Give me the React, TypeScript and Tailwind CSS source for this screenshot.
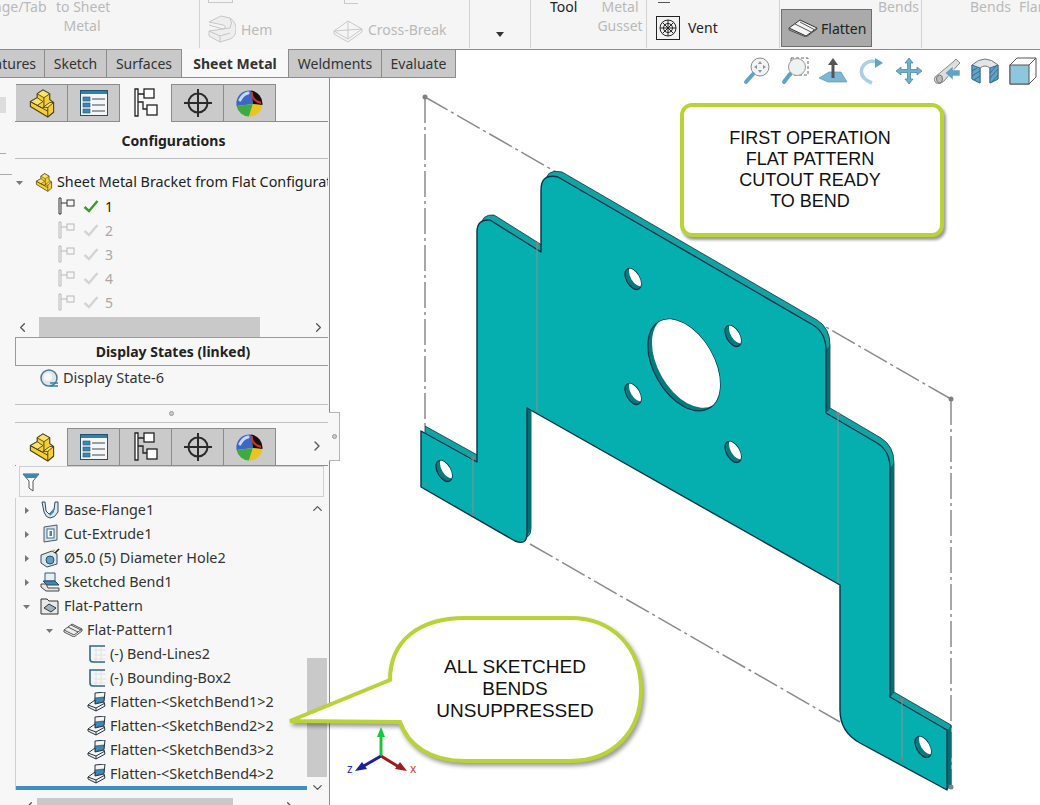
import type { ReactNode } from 'react';
import { ChevronDown, ChevronLeft, ChevronRight, ChevronUp } from 'lucide-react';

const FACE =
  'M421 431 L477 462 L477 232 Q477 219 490 220 L541 252 L541 190 Q541 173 558 177 L813 325 Q826 333 826 350 L826 413 L877 443 Q890 451 890 468 L890 697 L947 730 L947 790 L860 743 Q840 732 840 710 L840 585 L527 408 L527 533 Q527 546 515 541 L421 487 Z';

const HOLES = [
  { x: 633, y: 279, a: 11.5, b: 6.5 },
  { x: 733, y: 336, a: 11.5, b: 6.5 },
  { x: 633, y: 394, a: 11.5, b: 6.5 },
  { x: 733, y: 452, a: 11.5, b: 6.5 },
  { x: 684, y: 365, a: 50, b: 30 },
  { x: 444, y: 471, a: 11.5, b: 6.5 },
  { x: 923, y: 747, a: 11.5, b: 6.5 },
];

function Part() {
  return (
    <svg viewBox="0 0 1040 805" className="pointer-events-none absolute left-0 top-0 h-[805px] w-[1040px]">
      <g stroke="#8a8a8a" strokeWidth="1.5" fill="none" strokeDasharray="26 4 3 4">
        <path d="M425 97 L556 172" />
        <path d="M425 97 L425 427" />
        <path d="M951 399 L819 323" />
        <path d="M951 399 L951 787" />
        <path d="M530 544 L840 722" />
      </g>
      <path d={FACE} transform="translate(4 -5)" fill="#12a3a3" stroke="#07344a" strokeWidth="0.8" />
      <path d="M826 350 L830 345 L830 409 L826 413 Z" fill="#006f72" />
      <path d="M890 468 L894 463 L894 693 L890 697 Z" fill="#006f72" />
      <path d="M947 730 L951 726 L951 786 L947 790 Z" fill="#006f72" />
      <path d="M527 408 L531 410 L531 530 L527 535 Z" fill="#006f72" />
      <path d={FACE} fill="#06afaf" stroke="#07344a" strokeWidth="1.4" strokeLinejoin="round" />
      <defs>
        {HOLES.map((h, i) => (
          <clipPath id={`hole-${i}`} key={i}>
            <ellipse cx={h.x} cy={h.y} rx={h.b} ry={h.a} transform={`rotate(-30 ${h.x} ${h.y})`} />
          </clipPath>
        ))}
      </defs>
      {HOLES.map((h, i) => (
        <g key={i}>
          <ellipse cx={h.x} cy={h.y} rx={h.b} ry={h.a} transform={`rotate(-30 ${h.x} ${h.y})`} fill="#067a7c" stroke="#07344a" strokeWidth="1.3" />
          <g clipPath={`url(#hole-${i})`}>
            <ellipse cx={h.x + 4} cy={h.y - 3} rx={h.b} ry={h.a} transform={`rotate(-30 ${h.x + 4} ${h.y - 3})`} fill="#ffffff" />
          </g>
        </g>
      ))}
      <g stroke="#7f9395" strokeWidth="1.2" fill="none">
        <path d="M537 244 L537 411" />
        <path d="M473 460 L473 516" />
        <path d="M838 414 L838 583" />
        <path d="M902 699 L902 760" />
      </g>
      <g fill="#808080">
        <circle cx="425" cy="97" r="2.5" />
        <circle cx="951" cy="399" r="2.5" />
        <circle cx="951" cy="787" r="2.5" />
        <circle cx="838" cy="414" r="2" />
        <circle cx="902" cy="700" r="2" />
        <circle cx="537" cy="244" r="2" />
        <circle cx="473" cy="458" r="2" />
        <circle cx="425" cy="484" r="1.5" />
        <circle cx="473" cy="514" r="1.5" />
        <circle cx="902" cy="759" r="1.5" />
      </g>
      <path d="M381 755 L381 736" stroke="#22c23a" strokeWidth="3" />
      <path d="M381 727 L377 737 L385 737 Z" fill="#14cc38" />
      <path d="M381 756 L362 767" stroke="#1b1fa0" strokeWidth="3" />
      <path d="M355 771 L362 762 L367 769 Z" fill="#1b1fa0" />
      <path d="M381 756 L399 767" stroke="#a01c1c" strokeWidth="3" />
      <path d="M407 771 L395 769 L400 762 Z" fill="#a01c1c" />
      <path
        d="M390 680 C390 640 420 618 465 618 L570 618 C615 618 641 650 641 690 C641 730 615 761 570 761 L465 761 C430 761 408 745 400 722 L290 721 Z"
        fill="#ffffff"
        stroke="#b7d335"
        strokeWidth="4"
        strokeLinejoin="miter"
        className="drop-shadow-[2px_3px_2px_rgba(0,0,0,0.4)]"
      />
    </svg>
  );
}

function Tri({ open }: { open?: boolean }) {
  return (
    <svg width="9" height="9" viewBox="0 0 9 9" className="shrink-0">
      {open ? <path d="M1 3 L8 3 L4.5 7 Z" fill="#777" /> : <path d="M3 1 L7 4.5 L3 8 Z" fill="#777" />}
    </svg>
  );
}

function PartIcon({ w = 26, h = 29 }: { w?: number; h?: number }) {
  return (
    <svg width={w} height={h} viewBox="0 0 26 30" className="shrink-0">
      <path d="M1 13 L8 9 L8 5 L14 1 L21 5 L21 11 L25 14 L25 24 L19 29 L1 18 Z" fill="#f5d02e" stroke="#4a4020" strokeWidth="1.2" strokeLinejoin="round" />
      <path d="M8 5 L15 9 L21 5 L14 1 Z M1 13 L8 9 L14 13 L8 17 Z M14 19 L21 14 L25 14 L19 19 Z" fill="#fbe36a" stroke="#4a4020" strokeWidth="0.9" strokeLinejoin="round" />
      <path d="M15 9 L15 19 M19 19 L19 29 M1 13 L19 23 M8 17 L14 20" fill="none" stroke="#4a4020" strokeWidth="1" />
    </svg>
  );
}

function ListIcon() {
  return (
    <svg width="28" height="26" viewBox="0 0 28 26">
      <rect x="0.5" y="0.5" width="27" height="25" fill="#f3f7fa" stroke="#23506f" />
      <rect x="1" y="1" width="26" height="3" fill="#2f7fb0" />
      <g fill="#3d88b6" stroke="#23506f" strokeWidth="0.6">
        <rect x="3" y="7" width="7" height="4" />
        <rect x="3" y="13" width="7" height="4" />
        <rect x="3" y="19" width="7" height="4" />
      </g>
      <path d="M12 9 H25 M12 15 H25 M12 21 H25" stroke="#444" />
    </svg>
  );
}

function ConfigIcon() {
  return (
    <svg width="24" height="30" viewBox="0 0 24 30">
      <g fill="#fff" stroke="#222" strokeWidth="1.3">
        <rect x="10" y="1" width="10" height="9" />
        <rect x="13" y="17" width="10" height="10" />
        <path d="M1 1 H4 V28 H1 Z" />
        <path d="M4 6 H10 M4 14 H9 V21 H13" fill="none" />
      </g>
    </svg>
  );
}

function TargetIcon() {
  return (
    <svg width="28" height="28" viewBox="0 0 28 28">
      <circle cx="14" cy="14" r="9.5" fill="none" stroke="#2a2a2a" strokeWidth="2" />
      <path d="M14 0 V28 M0 14 H28" stroke="#2a2a2a" strokeWidth="2" />
    </svg>
  );
}

function SphereIcon() {
  return (
    <svg width="27" height="27" viewBox="0 0 27 27">
      <path d="M17 14 L15 .6 A13 13 0 0 0 .6 16 Z" fill="#3d67c4" />
      <path d="M17 14 L.6 16 A13 13 0 0 0 13 26.5 Z" fill="#3dab3d" />
      <path d="M17 14 L13 26.5 A13 13 0 0 0 26.4 15 Z" fill="#ecc41c" />
      <path d="M17 14 L26.4 15 A13 13 0 0 0 15 .6 Z" fill="#1a0c0c" />
      <path d="M16 2 Q15 10 25 13" stroke="#c8382c" strokeWidth="2" fill="none" />
      <path d="M4 10 Q7 4 12 3" stroke="#c6d9f5" strokeWidth="3" fill="none" strokeLinecap="round" />
    </svg>
  );
}

function PanelTabs({ active }: { active: number }) {
  const icons = [<PartIcon key="p" />, <ListIcon key="l" />, <ConfigIcon key="c" />, <TargetIcon key="t" />, <SphereIcon key="s" />];
  return (
    <div className="flex h-[38px] items-stretch border-b border-[#8c8c8c] pl-px pr-0">
      {icons.map((icon, i) => (
        <div
          key={i}
          className={
            i === active
              ? 'relative -mb-px flex w-[52px] items-center justify-center border-r border-[#8c8c8c] bg-[#f7f7f7]'
              : 'flex w-[52px] items-center justify-center border-r border-t border-[#8c8c8c] bg-[#cacaca]'
          }
        >
          {icon}
        </div>
      ))}
    </div>
  );
}

function FlagIcon({ faded }: { faded?: boolean }) {
  const c = faded ? '#b8b8b8' : '#333';
  return (
    <svg width="18" height="18" viewBox="0 0 18 18" className="shrink-0">
      <path d="M1 1 V17 M3 1 V17 M1 1 H3 M1 17 H3 M3 6 L9 6" stroke={c} fill="none" />
      <rect x="9" y="3" width="7" height="6" fill="none" stroke={c} />
    </svg>
  );
}

function Check({ faded }: { faded?: boolean }) {
  return (
    <svg width="16" height="14" viewBox="0 0 16 14" className="shrink-0">
      <path d="M1.5 8 L6 12 L14.5 2" fill="none" stroke={faded ? '#d4d4d4' : '#3f9a2b'} strokeWidth="2.4" />
    </svg>
  );
}

function ConfigRow({ n, active }: { n: number; active?: boolean }) {
  return (
    <div className="flex h-6 items-center pl-[43px]">
      <FlagIcon faded={!active} />
      <span className="ml-[7px]"><Check faded={!active} /></span>
      <span className={active ? 'ml-[6px] text-[#222]' : 'ml-[6px] text-[#a8a8a8]'}>{n}</span>
    </div>
  );
}

function FlangeIcon() {
  return (
    <svg width="20" height="20" viewBox="0 0 20 20">
      <path d="M2 2 L4 12 Q6 18 10 18 Q15 18 18 12 L18 2 L15 2 L14 10 L9 14 L6 11 L5 2 Z" fill="#dfe8ee" stroke="#2e4d63" />
      <path d="M9 14 L14 8 L14 12 L10 16 Z" fill="#3f87b4" />
    </svg>
  );
}

function CutIcon() {
  return (
    <svg width="20" height="20" viewBox="0 0 20 20">
      <path d="M4 3 L17 1 L17 16 L4 18 Z" fill="#dbe3e8" stroke="#4b5a63" />
      <rect x="7" y="5" width="7" height="9" fill="#fff" stroke="#2f6f98" />
      <rect x="9.5" y="7" width="2.5" height="5" fill="#3f87b4" />
    </svg>
  );
}

function HoleIcon() {
  return (
    <svg width="20" height="20" viewBox="0 0 20 20">
      <path d="M1 7 L12 3 L17 6 L17 16 L7 19 L1 15 Z" fill="#dfe6ea" stroke="#3a4a55" />
      <circle cx="10" cy="12" r="4" fill="#5f9fc8" stroke="#24506e" />
      <path d="M15 5 L19 1" stroke="#222" strokeWidth="1.6" />
      <circle cx="14" cy="2.5" r="1" fill="#e0b020" />
    </svg>
  );
}

function BendIcon() {
  return (
    <svg width="20" height="20" viewBox="0 0 20 20">
      <path d="M5 1 L15 1 L15 9 L5 9 Z" fill="#e8eef2" stroke="#2c5a7a" />
      <path d="M3 9 L15 9 L19 13 L7 13 Z" fill="#3f87b4" stroke="#234b66" />
      <path d="M1 12 L6 12 L8 16 L19 16 L19 19 L6 19 L1 15 Z" fill="#e6e6e6" stroke="#444" />
    </svg>
  );
}

function FolderIcon() {
  return (
    <svg width="20" height="20" viewBox="0 0 20 20">
      <path d="M1 3 H7 L9 5 H18 V18 H1 Z" fill="#e9e9e9" stroke="#333" />
      <path d="M4 12 L9 8 L16 12 L11 16 Z" fill="#9fb4c0" stroke="#333" />
    </svg>
  );
}

function FlatIcon() {
  return (
    <svg width="20" height="14" viewBox="0 0 20 14">
      <path d="M1 7 L9 1 L19 6 L11 12 Z" fill="#eee" stroke="#555" />
      <path d="M1 7 L1 9 L11 14 L19 8 L19 6 M5 4 L15 9 M8 2 L18 7" fill="none" stroke="#555" />
    </svg>
  );
}

function SketchIcon() {
  return (
    <svg width="20" height="20" viewBox="0 0 20 20">
      <path d="M7 6 H19 M7 11 H19 M7 15 H19 M9 3 V17 M14 3 V17" stroke="#e2e2e2" fill="none" />
      <path d="M18 2 H3 V15 Q3 18 6 18 H18" stroke="#2d6a8e" strokeWidth="1.6" fill="none" />
    </svg>
  );
}

function FlattenIcon() {
  return (
    <svg width="20" height="20" viewBox="0 0 20 20">
      <path d="M8 1 L18 0 L17 9 L8 11 Z" fill="#f2f5f6" stroke="#26343d" />
      <path d="M8 6 L17 5 L17 10 L8 12 Z" fill="#3f87b4" stroke="#26343d" strokeWidth="0.6" />
      <path d="M1 13 L8 8 L8 12 L17 10 L18 14 L9 19 L1 15 Z" fill="#f5f5f5" stroke="#26343d" />
      <path d="M1 13 L9 16 L18 11 M9 16 L9 19" fill="none" stroke="#26343d" />
    </svg>
  );
}

function TreeRow({ pad, icon, label, arrow, gap = 4 }: { pad: number; icon: ReactNode; label: string; arrow?: 'open' | 'closed'; gap?: number }) {
  return (
    <div className="flex h-6 items-center whitespace-nowrap text-[14.35px]" style={{ paddingLeft: pad }}>
      <span className="flex w-[18px] shrink-0 items-center">{arrow ? <Tri open={arrow === 'open'} /> : null}</span>
      <span className="flex w-5 shrink-0 items-center justify-center">{icon}</span>
      <span className="text-[#333]" style={{ marginLeft: gap }}>{label}</span>
    </div>
  );
}

function RibbonText({ lines, className }: { lines: string[]; className: string }) {
  return (
    <div className={`-mt-[3px] whitespace-nowrap text-center leading-[19px] ${className}`}>
      {lines.map((l) => (
        <div key={l}>{l}</div>
      ))}
    </div>
  );
}

function Ribbon() {
  const col = 'flex h-[48px] shrink-0 border-r border-[#d2d2d2]';
  return (
    <div className="flex h-[49px] overflow-hidden bg-[#f5f5f5] text-[#b9b9b9]">
      <div className={`${col} w-[200px]`}>
        <RibbonText lines={['nge/Tab']} className="-ml-[7px] w-[55px] text-left" />
        <RibbonText lines={['to Sheet', 'Metal']} className="ml-[8px] w-[52px]" />
      </div>
      <div className={`${col} relative w-[270px] items-end pb-[5px] pl-[8px]`}>
        <div className="absolute left-[8px] top-0 h-[3px] w-[25px] border-x border-b border-[#c9c9c9]" />
        <div className="absolute left-[144px] top-0 h-[4px] w-[14px] border-b border-l border-[#c9c9c9]" />
        <svg width="28" height="28" viewBox="0 0 28 28">
          <path d="M1 7 L13 1 L22 3 Q28 7 28 14 Q28 22 22 24 L12 27 L1 21 L1 16 L15 14 Q20 12 15 10 Z" fill="#eeeeee" stroke="#c6c6c6" />
          <path d="M1 10 L15 14 M22 3 Q25 8 22 13 L15 14 M1 16 L12 21 L12 27 M12 21 L22 18" fill="none" stroke="#c6c6c6" />
        </svg>
        <span className="mb-[3px] ml-[5px] w-[92px]">Hem</span>
        <svg width="30" height="24" viewBox="0 0 30 24">
          <path d="M1 12 L15 2 L29 10 L15 20 Z M1 12 L1 15 L15 23 L29 13 L29 10 M15 2 L15 20 M1 12 L29 10" fill="none" stroke="#c9c9c9" />
        </svg>
        <span className="mb-[3px] ml-[5px]">Cross-Break</span>
      </div>
      <div className={`${col} w-[61px] items-end justify-center pb-[11px]`}>
        <svg width="8" height="5" viewBox="0 0 8 5"><path d="M0 0 H8 L4 5 Z" fill="#333" /></svg>
      </div>
      <div className={`${col} w-[116px] pl-[19px]`}>
        <div className="-mt-[3px] w-[47px] leading-[19px] text-[#222]">Tool</div>
        <RibbonText lines={['Metal', 'Gusset']} className="w-[46px]" />
      </div>
      <div className={`${col} relative w-[133px] items-end pb-[8px] pl-[9px]`}>
        <div className="absolute left-[11px] top-0 h-[3px] w-[12px] border-b border-[#555]" />
        <svg width="24" height="24" viewBox="0 0 24 24">
          <rect x="0.5" y="0.5" width="23" height="23" fill="#f2f2f2" stroke="#222" />
          <circle cx="12" cy="12" r="8" fill="none" stroke="#222" />
          <circle cx="12" cy="12" r="4.5" fill="none" stroke="#222" />
          <path d="M12 4 V20 M4 12 H20 M6.5 6.5 L17.5 17.5 M17.5 6.5 L6.5 17.5" stroke="#222" />
        </svg>
        <span className="mb-[2px] ml-[8px] text-[#222]">Vent</span>
      </div>
      <div className={`${col} w-[142px] pl-px`}>
        <div className="mt-[9px] flex h-[38px] w-[91px] items-center border border-[#6e6e6e] bg-[#aaaaaa] pl-[6px] text-[#222]">
          <svg width="30" height="18" viewBox="0 0 30 18">
            <path d="M1 9 L12 1 L29 9 L18 17 Z" fill="#f4f4f4" stroke="#333" />
            <path d="M1 9 L1 11 L18 18 L29 10 L29 9 M7 5 L23 13 M12 3 L27 11" fill="none" stroke="#555" />
          </svg>
          <span className="ml-[3px]">Flatten</span>
        </div>
        <div className="-mt-[3px] ml-[6px] leading-[19px]">Bends</div>
      </div>
      <div className="flex pl-[48px]">
        <div className="-mt-[3px] leading-[19px]">Bends</div>
        <div className="-mt-[3px] ml-[8px] leading-[19px]">Flar</div>
      </div>
    </div>
  );
}

function ToolIcon({ children }: { children: ReactNode }) {
  return (
    <svg width="28" height="28" viewBox="0 0 28 28" className="shrink-0">
      {children}
    </svg>
  );
}

function ViewToolbar() {
  return (
    <div className="ml-auto flex h-[28px] items-start gap-[10px] pr-[3px] pt-[7px]">
      <ToolIcon>
        <circle cx="17" cy="10" r="9" fill="#f3f3f3" stroke="#8b8b8b" />
        <path d="M17 4 L15 7 H19 Z M17 16 L15 13 H19 Z M11 10 L14 8 V12 Z M23 10 L20 8 V12 Z" fill="#7e98a8" />
        <path d="M10 17 L3 25" stroke="#5fa4c6" strokeWidth="4" strokeLinecap="round" />
      </ToolIcon>
      <ToolIcon>
        <rect x="10" y="1" width="17" height="17" fill="none" stroke="#666" strokeDasharray="3 2" />
        <circle cx="16" cy="10" r="8.5" fill="#eef2f3" stroke="#9a9a9a" />
        <path d="M9 17 L3 25" stroke="#5fa4c6" strokeWidth="4" strokeLinecap="round" />
      </ToolIcon>
      <ToolIcon>
        <path d="M0 21 L10 15 H22 L28 25 H9 Z" fill="#7ab8d6" stroke="#4d8fb0" strokeWidth="0.6" />
        <path d="M14 21 V7" stroke="#555" strokeWidth="3" />
        <path d="M14 1 L9 8 H19 Z" fill="#555" />
      </ToolIcon>
      <ToolIcon>
        <path d="M23 6 Q10 1 5 11 Q2 21 15 26" fill="none" stroke="#a9d0e3" strokeWidth="3.5" />
        <path d="M18 1 L26 6 L18 11 Z" fill="#5fa4c6" />
      </ToolIcon>
      <ToolIcon>
        <path d="M14 1 L18 6 H15.5 V12.5 H22 V10 L27 14 L22 18 V15.5 H15.5 V22 H18 L14 27 L10 22 H12.5 V15.5 H6 V18 L1 14 L6 10 V12.5 H12.5 V6 H10 Z" fill="#6fb0d0" stroke="#3f7f9f" strokeWidth="0.7" />
      </ToolIcon>
      <ToolIcon>
        <path d="M2 20 L20 5 L23 2 L27 6 L24 9 L11 24 Q7 28 3 26 Q0 23 2 20 Z" fill="#dddddd" stroke="#8a8a8a" />
        <ellipse cx="6.5" cy="22" rx="3" ry="4" fill="#bbbbbb" stroke="#777" />
        <path d="M27 13 V19 H20 L20 23 L12 16 L20 9 L20 13 Z" fill="#5fa4c6" stroke="#fff" strokeWidth="0.5" />
      </ToolIcon>
      <ToolIcon>
        <path d="M1 8 Q14 -4 27 8 V22 L19 26 V11 Q14 7 9 11 V26 L1 22 Z" fill="#dfe5e9" stroke="#777" />
        <path d="M1 8 L9 11 V26 L1 22 Z M19 11 L27 8 V22 L19 26 Z" fill="#5fa4c6" stroke="#35708f" />
        <path d="M1 14 L6 11 M1 19 L9 14 M3 23 L9 19 M19 16 L25 9 M19 21 L27 12 M21 25 L27 18" stroke="#2f5f7c" strokeWidth="0.8" />
      </ToolIcon>
      <ToolIcon>
        <path d="M1 8 L8 1 H27 V20 L20 27 H1 Z" fill="#fff" stroke="#555" />
        <rect x="1" y="8" width="19" height="19" fill="#8ec7dd" stroke="#555" />
        <path d="M20 8 L27 1" stroke="#555" />
      </ToolIcon>
    </div>
  );
}

function TabStrip() {
  const tab = 'flex items-center justify-center border-y border-r border-[#8c8c8c] bg-[#c9c9c9] text-[#333]';
  return (
    <div className="flex h-[29px] bg-white">
      <div className={`${tab} w-[45px] justify-end pr-[8px]`}>atures</div>
      <div className={`${tab} w-[62px]`}>Sketch</div>
      <div className={`${tab} w-[75px]`}>Surfaces</div>
      <div className="flex w-[107px] items-center justify-center border-b border-r border-[#8c8c8c] bg-[#f8f8f8] font-bold text-[#333]">Sheet Metal</div>
      <div className={`${tab} w-[93px]`}>Weldments</div>
      <div className={`${tab} w-[74px]`}>Evaluate</div>
      <div className="flex flex-1 border-t border-[#8c8c8c]">
        <ViewToolbar />
      </div>
    </div>
  );
}

function LeftPanel() {
  return (
    <div className="relative h-[727px] w-[330px] shrink-0 overflow-visible border-r border-[#8c8c8c] bg-[#f7f7f7]">
      <div className="absolute left-0 top-[19px] h-[16px] w-[6px] bg-[#dddddd]" />
      <div className="absolute left-0 top-[75px] h-px w-[6px] bg-[#aaaaaa]" />
      <div className="absolute left-0 top-[96px] h-px w-[12px] bg-[#aaaaaa]" />
      <div className="absolute left-[329px] top-[334px] flex h-[49px] w-[11px] items-center justify-center border-y border-r border-[#b5b5b5] bg-[#f7f7f7]">
        <span className="h-[5px] w-[5px] rounded-full border border-[#999] bg-[#ccc]" />
      </div>
      <div className="ml-[15px] mr-px h-full overflow-hidden pt-[6px]">
        <PanelTabs active={2} />
        <div className="flex h-[37px] items-center justify-center border-b border-[#bdbdbd] pl-[4px] font-bold text-[#222]">Configurations</div>
        <div className="pt-[11px]">
          <div className="flex h-6 items-center overflow-hidden whitespace-nowrap text-[14.35px]">
            <span className="flex w-[20px] shrink-0 items-center"><Tri open /></span>
            <PartIcon w={18} h={19} />
            <span className="ml-[4px] text-[#222]">Sheet Metal Bracket from Flat Configuration</span>
          </div>
          <ConfigRow n={1} active />
          <ConfigRow n={2} />
          <ConfigRow n={3} />
          <ConfigRow n={4} />
          <ConfigRow n={5} />
        </div>
        <div className="mt-[3px] flex h-[20px] items-center justify-between text-[#555]">
          <ChevronLeft size={15} />
          <div className="ml-[9px] h-full w-[221px] bg-[#c9c9c9]" />
          <div className="flex-1" />
          <ChevronRight size={15} className="mr-[2px]" />
        </div>
        <div className="flex h-[29px] items-center justify-center border border-r-0 border-[#9a9a9a] pl-[2px] pb-px font-bold text-[#222]">Display States (linked)</div>
        <div className="flex h-6 items-center whitespace-nowrap pl-[25px] text-[14.5px]">
          <svg width="19" height="19" viewBox="0 0 19 19">
            <circle cx="9" cy="9" r="8" fill="#dfe6ea" stroke="#4b7a96" strokeWidth="1.5" />
            <circle cx="8" cy="8" r="4" fill="#f7f7f7" />
            <path d="M10 14 H18 M10 17 H18" stroke="#2f7fb0" strokeWidth="1.5" />
          </svg>
          <span className="ml-[4px] text-[#333]">Display State-6</span>
        </div>
        <div className="mt-[14px] flex h-[19px] items-center justify-center border-y border-[#c2c2c2]">
          <span className="h-[5px] w-[5px] rounded-full border border-[#999] bg-[#ccc]" />
        </div>
        <div className="relative mt-[5px]">
          <PanelTabs active={0} />
          <ChevronRight size={16} className="absolute right-[3px] top-[10px] text-[#555]" />
        </div>
        <div className="ml-[4px] mr-[4px] flex h-[31px] items-center border border-[#cfcfcf] pl-[2px]">
          <svg width="18" height="20" viewBox="0 0 18 20">
            <path d="M1 2 H17 L11 9 V19 L7 16 V9 Z" fill="#fff" stroke="#555" />
            <path d="M1 2 H17 L14 6 H4 Z" fill="#3d88b6" />
          </svg>
        </div>
        <div className="mt-px flex h-[299px] items-start">
          <div className="w-[292px] border-l border-[#cfcfcf]">
            <TreeRow pad={6} arrow="closed" icon={<FlangeIcon />} label="Base-Flange1" />
            <TreeRow pad={6} arrow="closed" icon={<CutIcon />} label="Cut-Extrude1" />
            <TreeRow pad={6} arrow="closed" icon={<HoleIcon />} label="Ø5.0 (5) Diameter Hole2" />
            <TreeRow pad={6} arrow="closed" icon={<BendIcon />} label="Sketched Bend1" />
            <TreeRow pad={6} arrow="open" icon={<FolderIcon />} label="Flat-Pattern" />
            <TreeRow pad={29} arrow="open" icon={<FlatIcon />} label="Flat-Pattern1" />
            <TreeRow pad={53} icon={<SketchIcon />} label="(-) Bend-Lines2" gap={3} />
            <TreeRow pad={53} icon={<SketchIcon />} label="(-) Bounding-Box2" gap={3} />
            <TreeRow pad={53} icon={<FlattenIcon />} label="Flatten-<SketchBend1>2" gap={3} />
            <TreeRow pad={53} icon={<FlattenIcon />} label="Flatten-<SketchBend2>2" gap={3} />
            <TreeRow pad={53} icon={<FlattenIcon />} label="Flatten-<SketchBend3>2" gap={3} />
            <TreeRow pad={53} icon={<FlattenIcon />} label="Flatten-<SketchBend4>2" gap={3} />
            <div className="h-[4px] bg-[#3f8fc4]" />
          </div>
          <div className="w-[20px] text-[#555]">
            <div className="flex h-[20px] items-center justify-center"><ChevronUp size={15} /></div>
            <div className="h-[140px]" />
            <div className="h-[119px] bg-[#c9c9c9]" />
            <div className="flex h-[20px] items-center justify-center"><ChevronDown size={15} /></div>
          </div>
        </div>
        <div className="mt-[1px] flex h-[7px] items-start pl-[7px] text-[#555]">
          <ChevronLeft size={15} className="mt-[1px] shrink-0" />
          <div className="h-full w-[196px] bg-[#c9c9c9]" />
          <ChevronRight size={15} className="ml-[49px] mt-[1px] shrink-0" />
        </div>
      </div>
    </div>
  );
}

export default function App() {
  return (
    <div className="relative h-[805px] w-[1040px] overflow-hidden bg-white font-['Noto_Sans',sans-serif] text-[14px]">
      <Ribbon />
      <TabStrip />
      <div className="flex">
        <LeftPanel />
        <div className="flex-1" />
      </div>
      <Part />
      <div className="absolute left-[680px] top-[103px] flex h-[134px] w-[264px] items-center justify-center rounded-[12px] border-4 border-[#b7d335] bg-white pr-[4px] text-center font-['Liberation_Sans',sans-serif] text-[18px] leading-[21px] text-[#111] shadow-[2px_3px_3px_rgba(0,0,0,0.4)]">
        <div>
          FIRST OPERATION
          <br />
          FLAT PATTERN
          <br />
          CUTOUT READY
          <br />
          TO BEND
        </div>
      </div>
      <div className="absolute left-[415px] top-[656px] w-[200px] text-center font-['Liberation_Sans',sans-serif] text-[19px] leading-[22px] text-[#111]">
        ALL SKETCHED
        <br />
        BENDS
        <br />
        UNSUPPRESSED
      </div>
      <span className="absolute left-[347px] top-[761px] text-[12px] leading-4 text-[#2a2ac0]">z</span>
      <span className="absolute left-[410px] top-[761px] text-[12px] leading-4 text-[#d04040]">x</span>
    </div>
  );
}
